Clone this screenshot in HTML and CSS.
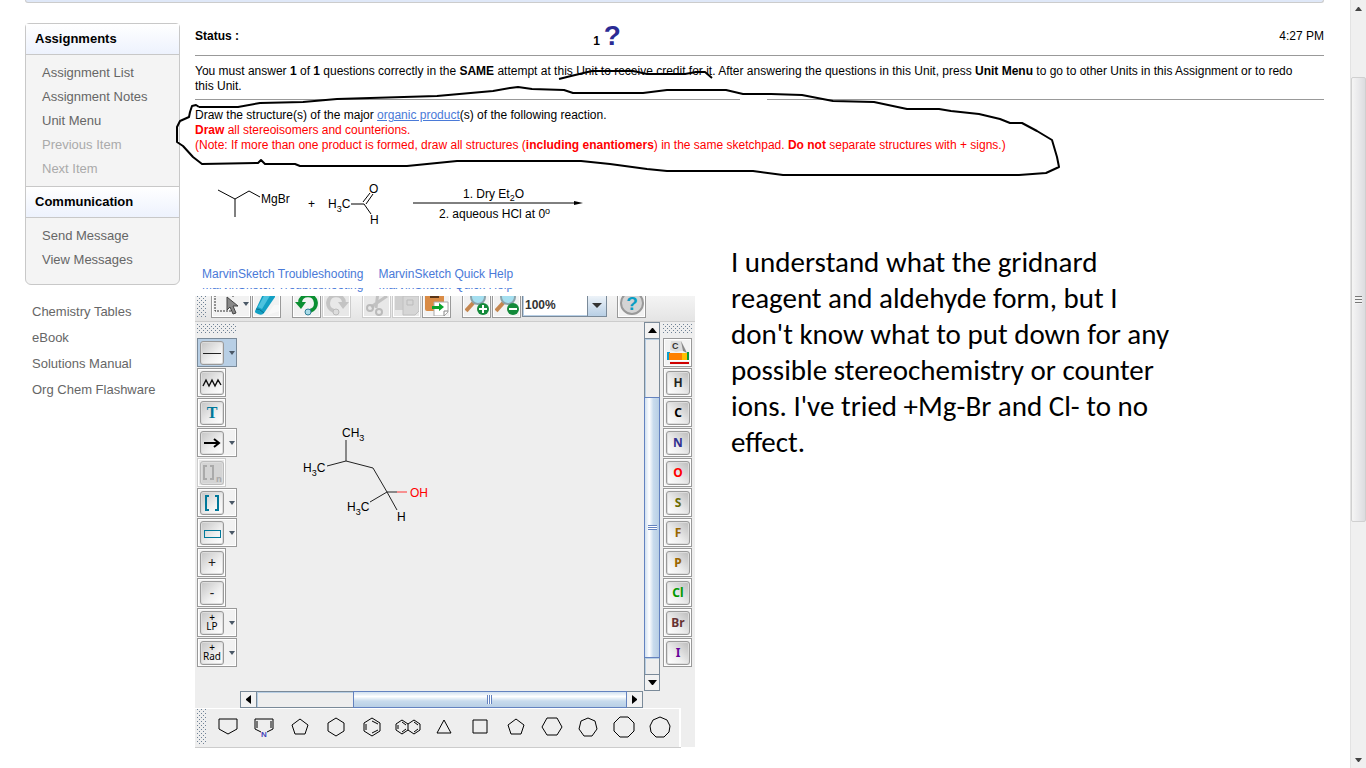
FILE: index.html
```html
<!DOCTYPE html>
<html lang="en">
<head>
    <meta charset="UTF-8">
    <meta name="viewport" content="width=device-width, initial-scale=1.0">
    <title>Unit Question</title>
    <link rel="stylesheet" href="styles.css">
</head>
<body>

    <div class="page">
        <div class="topbar"></div>

        <div class="columns">
            <div class="side">
                <div class="menu">
                    <h2>Assignments</h2>
                    <ul>
                        <li><a href="#">Assignment List</a></li>
                        <li><a href="#">Assignment Notes</a></li>
                        <li><a href="#">Unit Menu</a></li>
                        <li><a href="#" class="off">Previous Item</a></li>
                        <li><a href="#" class="off">Next Item</a></li>
                    </ul>
                    <h2 class="second">Communication</h2>
                    <ul class="last">
                        <li><a href="#">Send Message</a></li>
                        <li><a href="#">View Messages</a></li>
                    </ul>
                </div>
                <ul class="links">
                    <li><a href="#">Chemistry Tables</a></li>
                    <li><a href="#">eBook</a></li>
                    <li><a href="#">Solutions Manual</a></li>
                    <li><a href="#">Org Chem Flashware</a></li>
                </ul>
            </div>

            <div class="content">
                <div class="status">
                    <b>Status :</b>
                    <div class="count"><b>1</b><span>?</span></div>
                    <div>4:27 PM</div>
                </div>
                <p class="rule">You must answer <b>1</b> of <b>1</b> questions correctly in the <b>SAME</b> attempt at this Unit to receive credit for it. After answering the questions in this Unit, press <b>Unit Menu</b> to go to other Units in this Assignment or to redo<br>this Unit.</p>
                <div class="question">
                    <p>Draw the structure(s) of the major <a href="#">organic product</a>(s) of the following reaction.</p>
                    <p class="red"><b>Draw</b> all stereoisomers and counterions.</p>
                    <p class="red">(Note: If more than one product is formed, draw all structures (<b>including enantiomers</b>) in the same sketchpad. <b>Do not</b> separate structures with + signs.)</p>
                </div>

                <div class="work">
                    <div class="sketch">
                        <svg class="reaction" viewBox="195 153 400 110">
                            <g class="bond">
                                <path d="M218 190L235 199V217M235 199L249 191L260 197"/>
                                <path d="M351 204H364L371 214M363 202L370 193M366 204L373 194"/>
                                <path d="M413 203H576"/>
                            </g>
                            <path d="M574 201L583 203L574 205z"/>
                            <text x="261" y="203">MgBr</text>
                            <text x="308" y="208">+</text>
                            <text x="328" y="208">H<tspan class="sub" dy="4">3</tspan><tspan dy="-4">C</tspan></text>
                            <text x="369" y="193">O</text>
                            <text x="370" y="224">H</text>
                            <text x="463" y="198">1. Dry Et<tspan class="sub" dy="3">2</tspan><tspan dy="-3">O</tspan></text>
                            <text x="439" y="218">2. aqueous HCl at 0<tspan class="sub" dy="-4">o</tspan></text>
                        </svg>

                        <div class="help"><a href="#">MarvinSketch Troubleshooting</a><a href="#">MarvinSketch Quick Help</a></div>
                        <div class="help cut"><a href="#">MarvinSketch Troubleshooting</a><a href="#">MarvinSketch Quick Help</a></div>

                        <div class="applet">
                            <div class="toolbar">
                                <i class="grip"></i>
                                <button class="tool wide" aria-label="Select">
                                    <svg class="icon" viewBox="0 0 24 24"><path d="M1 0V19H17M19 0V6" fill="none" stroke="#333" stroke-dasharray="2 1"/><path d="M13 5L13 18L16 15L19 22L22 21L19 14L24 14z" fill="#888" stroke="#444"/></svg>
                                    <i class="drop"></i>
                                </button>
                                <button class="tool" aria-label="Erase">
                                    <svg class="icon" viewBox="0 0 24 24"><path d="M12 23L19 13L25 13V19z" fill="#f8f8f8"/><path d="M9 0H20V5L9 21Q7 24 3 22L1 21Q-1 20 1 17z" fill="#12a0c4"/><path d="M1 17Q4 16 9 21" fill="none" stroke="#0a6f8c"/><path d="M11 0L3 15L7 17L16 2z" fill="#4cc3df"/></svg>
                                </button>
                                <button class="tool gap" aria-label="Undo">
                                    <svg class="icon" viewBox="0 0 24 24"><path d="M15 19A8 8 0 1 0 5 10" fill="none" stroke="#0b8f32" stroke-width="4"/><path d="M0 10H11L6 17z" fill="#0b8f32"/><circle cx="13" cy="20" r="3" fill="#a9dbe8" stroke="#2f7f98"/></svg>
                                </button>
                                <button class="tool off" aria-label="Redo">
                                    <svg class="icon" viewBox="0 0 24 24"><path d="M9 19A8 8 0 1 1 19 10" fill="none" stroke="#c4c4c4" stroke-width="4"/><path d="M24 10H13L18 17z" fill="#c4c4c4"/><circle cx="11" cy="20" r="3" fill="#ddd" stroke="#bbb"/></svg>
                                </button>
                                <button class="tool off gap" aria-label="Cut">
                                    <svg class="icon" viewBox="0 0 24 24"><path d="M13 0L11 16M22 4L6 15" fill="none" stroke="#c2c2c2" stroke-width="3"/><circle cx="5" cy="16" r="3" fill="none" stroke="#bbb" stroke-width="2"/><circle cx="14" cy="20" r="3" fill="none" stroke="#bbb" stroke-width="2"/></svg>
                                </button>
                                <button class="tool off" aria-label="Copy">
                                    <svg class="icon" viewBox="0 0 24 24"><path d="M0 0H16V18H0z" fill="#cfcfcf"/><path d="M8 4H24V19L20 23H8z" fill="#d6d6d6" stroke="#c0c0c0"/><path d="M12 8H18V13H12z" fill="none" stroke="#bbb"/></svg>
                                </button>
                                <button class="tool" aria-label="Paste">
                                    <svg class="icon" viewBox="0 0 24 24"><path d="M0 0H19V19H2Q0 19 0 17z" fill="#d98b45"/><path d="M5 3H14V6H5z" fill="#5a3517"/><path d="M9 10H23V20L19 24H9z" fill="#fff" stroke="#aaa"/><path d="M23 19H19V24" fill="none" stroke="#888"/><path d="M7 14H14V11L19 15L14 19V17H7z" fill="#08a32d"/></svg>
                                </button>
                                <button class="tool gap" aria-label="Zoom in">
                                    <svg class="icon" viewBox="0 0 24 24"><path d="M1 19L9 10" stroke="#c58750" stroke-width="4"/><circle cx="13" cy="5" r="7" fill="#a5dff0" stroke="#8aa3ab" stroke-width="2"/><circle cx="18" cy="17" r="6" fill="#138a3a"/><path d="M14 17H22M18 13V21" stroke="#fff" stroke-width="2"/></svg>
                                </button>
                                <button class="tool" aria-label="Zoom out">
                                    <svg class="icon" viewBox="0 0 24 24"><path d="M1 19L9 10" stroke="#c58750" stroke-width="4"/><circle cx="13" cy="5" r="7" fill="#a5dff0" stroke="#8aa3ab" stroke-width="2"/><circle cx="18" cy="17" r="6" fill="#138a3a"/><path d="M14 17H22" stroke="#fff" stroke-width="2"/></svg>
                                </button>
                                <div class="combo">
                                    <select aria-label="Zoom"><option>100%</option><option>200%</option></select>
                                    <span><i></i></span>
                                </div>
                                <button class="tool gap" aria-label="Help">
                                    <svg class="icon" viewBox="0 0 24 24"><circle cx="12" cy="11" r="11" fill="#d4d4d4" stroke="#999" stroke-width="2"/><text x="12" y="18" class="q">?</text></svg>
                                </button>
                            </div>

                            <div class="middle">
                                <div class="tools left">
                                    <i class="grip flat"></i>
                                    <button class="tool wide active" aria-label="Bond"><span class="key"><svg viewBox="0 0 24 24"><path d="M3 12H21" stroke="#222"/></svg></span><i class="drop"></i></button>
                                    <button class="tool" aria-label="Chain"><span class="key"><svg class="smooth" viewBox="0 0 24 24"><path d="M3 15L6 9L9 15L12 9L15 15L18 9L21 14" fill="none" stroke="#111" stroke-width="1.4"/></svg></span></button>
                                    <button class="tool"><span class="key serif">T</span></button>
                                    <button class="tool wide" aria-label="Arrow"><span class="key"><svg class="smooth" viewBox="0 0 24 24"><path d="M4 12H19M14 8L19 12L14 16" fill="none" stroke="#000" stroke-width="2"/></svg></span><i class="drop"></i></button>
                                    <button class="tool off" aria-label="Repeat group"><span class="key"><svg viewBox="0 0 24 24"><path d="M7 5H4V18H7M10 5H13V18H10" fill="none" stroke="#aaa" stroke-width="1.5"/><text x="16" y="21" class="n">n</text></svg></span></button>
                                    <button class="tool wide" aria-label="Brackets"><span class="key"><svg viewBox="0 0 24 24"><path d="M9 5H6V19H9M15 5H18V19H15" fill="none" stroke="#00789a" stroke-width="2"/></svg></span><i class="drop"></i></button>
                                    <button class="tool wide" aria-label="Rectangle"><span class="key"><svg viewBox="0 0 24 24"><path d="M4 9H20V16H4z" fill="none" stroke="#00789a" stroke-width="1"/></svg></span><i class="drop"></i></button>
                                    <button class="tool"><span class="key sign">+</span></button>
                                    <button class="tool"><span class="key sign">-</span></button>
                                    <button class="tool wide"><span class="key two"><span>+</span><span>LP</span></span><i class="drop"></i></button>
                                    <button class="tool wide"><span class="key two"><span>+</span><span>Rad</span></span><i class="drop"></i></button>
                                </div>

                                <svg class="canvas" viewBox="240 322 403 369">
                                    <path d="M346 440V461L327 466M346 461L373 468L387 492L370 502M387 492L397 510M387 492H397" fill="none" stroke="#222"/>
                                    <path d="M397 492H407" stroke="#f33"/>
                                    <text x="342" y="437">CH<tspan class="sub" dy="4">3</tspan></text>
                                    <text x="303" y="472">H<tspan class="sub" dy="4">3</tspan><tspan dy="-4">C</tspan></text>
                                    <text x="347" y="511">H<tspan class="sub" dy="4">3</tspan><tspan dy="-4">C</tspan></text>
                                    <text x="397" y="521">H</text>
                                    <text x="410" y="497" fill="#f00">OH</text>
                                </svg>

                                <div class="vscroll">
                                    <button aria-label="Scroll up"><svg viewBox="0 0 9 5"><path d="M0 5L4 0H5L9 5z"/></svg></button>
                                    <div class="before"></div>
                                    <div class="thumb"><i></i></div>
                                    <div class="after"></div>
                                    <button aria-label="Scroll down"><svg viewBox="0 0 9 5"><path d="M0 0L4 5H5L9 0z"/></svg></button>
                                </div>

                                <div class="tools right">
                                    <i class="grip flat"></i>
                                    <button class="tool" aria-label="Periodic table">
                                        <svg class="icon" viewBox="0 0 24 24"><path d="M5 0H15L20 9L10 11L4 9z" fill="#ddd"/><path d="M15 0L21 12L17 10z" fill="#888"/><text x="6" y="8" class="n dark">C</text><path d="M1 11H4V19H1z" fill="#0aa0d0"/><path d="M3 12H16V19H3z" fill="#ff8000"/><path d="M16 12H21V19H16z" fill="#ffc000"/><path d="M21 11H23V19H21z" fill="#0a9a3a"/><path d="M4 21H23V23H4z" fill="#d00000"/><path d="M4 19H23V20H4z" fill="#fff"/></svg>
                                    </button>
                                    <button class="tool"><span class="key h">H</span></button>
                                    <button class="tool"><span class="key c">C</span></button>
                                    <button class="tool"><span class="key n">N</span></button>
                                    <button class="tool"><span class="key o">O</span></button>
                                    <button class="tool"><span class="key s">S</span></button>
                                    <button class="tool"><span class="key f">F</span></button>
                                    <button class="tool"><span class="key f">P</span></button>
                                    <button class="tool"><span class="key cl">Cl</span></button>
                                    <button class="tool"><span class="key br">Br</span></button>
                                    <button class="tool"><span class="key i">I</span></button>
                                </div>

                                <div class="hscroll">
                                    <button aria-label="Scroll left"><svg viewBox="0 0 5 9"><path d="M5 0L0 4V5L5 9z"/></svg></button>
                                    <div class="before"></div>
                                    <div class="thumb"><i></i></div>
                                    <button aria-label="Scroll right"><svg viewBox="0 0 5 9"><path d="M0 0L5 4V5L0 9z"/></svg></button>
                                </div>
                            </div>

                            <div class="rings">
                                <i class="grip"></i>
                                <button aria-label="Cyclopentane"><svg viewBox="0 0 24 24"><path d="M3 4H21V14L12 19L3 14z"/></svg></button>
                                <button aria-label="Pyrrole"><svg viewBox="0 0 24 24"><path d="M9 17L3 14V4H21V14L15 17M5 6V13M19 6V13"/><text x="9" y="22" class="nitro">N</text></svg></button>
                                <button aria-label="Five ring"><svg viewBox="0 0 24 24"><path d="M12 4L20 10L17 19H7L4 10z"/></svg></button>
                                <button aria-label="Cyclohexane"><svg viewBox="0 0 24 24"><path d="M12 3L20 8V16L12 21L4 16V8z"/></svg></button>
                                <button aria-label="Benzene"><svg viewBox="0 0 24 24"><path d="M12 3L20 8V16L12 21L4 16V8zM12 6L18 9M18 15L12 18M6 9V15"/></svg></button>
                                <button aria-label="Naphthalene"><svg class="naph" viewBox="0 0 28 24"><path d="M8 5L14 9V15L8 19L2 15V9zM14 9L20 5L26 9V15L20 19L14 15M4 10V14M8 7L12 10M8 17L12 14M20 7L24 10M20 17L24 14"/></svg></button>
                                <button aria-label="Triangle"><svg viewBox="0 0 24 24"><path d="M12 5L19 18H5z"/></svg></button>
                                <button aria-label="Square"><svg viewBox="0 0 24 24"><path d="M5 5H19V18H5z"/></svg></button>
                                <button aria-label="Pentagon"><svg viewBox="0 0 24 24"><path d="M12 4L20 10L17 19H7L4 10z"/></svg></button>
                                <button aria-label="Hexagon"><svg viewBox="0 0 24 24"><path d="M7 3H17L22 12L17 20H7L2 12z"/></svg></button>
                                <button aria-label="Heptagon"><svg viewBox="0 0 24 24"><path d="M12 3L19 6L21 14L16 21H8L3 14L5 6z"/></svg></button>
                                <button aria-label="Octagon"><svg viewBox="0 0 24 24"><path d="M8 2H16L22 8V16L16 22H8L2 16V8z"/></svg></button>
                                <button aria-label="Nonagon"><svg viewBox="0 0 24 24"><path d="M12 2L19 5L22 11L21 17L16 22H8L3 17L2 11L5 5z"/></svg></button>
                            </div>
                        </div>
                    </div>

                    <p class="note">I understand what the gridnard reagent and aldehyde form, but I don't know what to put down for any possible stereochemistry or counter ions. I've tried +Mg-Br and Cl- to no effect.</p>
                </div>
            </div>
        </div>
    </div>

    <div class="scrollbar">
        <svg viewBox="0 0 7 4"><path d="M0 4L3 0H4L7 4z"/></svg>
        <div class="before"></div>
        <div class="thumb"><i></i></div>
        <div class="after"></div>
        <svg viewBox="0 0 7 4"><path d="M0 0L3 4H4L7 0z"/></svg>
    </div>

    <!-- pen marks drawn over the question -->
    <svg class="pen" viewBox="0 0 1100 200">
        <path class="rub" d="M740 97H767V102H740z"/>
        <path d="M559 79L571 76L592 71H633L647 74H685L696 72H705L712 78"/>
        <path d="M199 107L196 105L192 106L190 112L189 117L180 121L177 127V142L183 146L193 157L202 164L258 163L261 160L265 164H295L300 166H407L457 161H581L610 164L647 169L667 171H753L783 175H1019L1046 173L1059 167L1057 157L1052 140L1037 131L1022 123H1010L1000 119L979 114L951 111L939 109H907L874 102L833 101L802 95L771 94H743L726 90H667L643 93H573L564 90L532 89L518 87L510 88L493 91L437 96L337 99L303 102L260 103L238 107H199"/>
    </svg>

</body>
</html>
```

FILE: styles.css
```css
* {
    box-sizing: border-box;
}
body {
    margin: 0;
    min-height: 100vh;
    display: flex;
    position: relative;
    background: #fff;
    color: #000;
    font-family: Arial, "Liberation Sans", sans-serif;
    font-size: 12px;
    line-height: 15px;
}
p, h2, ul {
    margin: 0;
    padding: 0;
}
ul {
    list-style: none;
}
a {
    color: #4a7ad8;
}
button {
    font-family: inherit;
    padding: 0;
    margin: 0;
    border: 0;
    background: none;
}
svg {
    display: block;
}
.page {
    flex: 1;
    min-width: 0;
    padding: 0 26px 0 25px;
}
.topbar {
    height: 3px;
    background: #dfe8f8;
    border: 1px solid #ccc;
    border-top: 0;
    border-radius: 0 0 4px 4px;
    margin-bottom: 20px;
}
.columns {
    display: flex;
    gap: 15px;
}

/* left menu */
.side {
    width: 155px;
    flex: none;
    font-size: 13px;
}
.side a {
    color: #666;
    text-decoration: none;
}
.side a.off {
    color: #aaa;
}
.menu {
    border: 1px solid #c8c8c8;
    border-radius: 4px 4px 6px 6px;
    background: #f4f4f4;
}
.menu h2 {
    font-size: 13px;
    line-height: 30px;
    padding-left: 9px;
    background: linear-gradient(#fff, #edf2fd);
    border-bottom: 1px solid #c8c8c8;
}
.menu h2.second {
    border-top: 1px solid #c8c8c8;
}
.menu ul {
    padding: 6px 0 5px 16px;
    line-height: 24px;
}
.menu ul.last {
    padding-bottom: 12px;
}
.links {
    padding: 14px 0 0 7px;
    line-height: 26px;
}

/* main column */
.content {
    flex: 1;
    min-width: 0;
}
.status {
    display: grid;
    grid-template-columns: 35% 1fr auto;
    height: 33px;
    padding-top: 6px;
    border-bottom: 1px solid #999;
}
.count {
    display: flex;
    align-items: baseline;
    gap: 4px;
    padding-left: 3px;
}
.count b {
    line-height: 24px;
}
.count span {
    font-size: 28px;
    line-height: 8px;
    font-weight: bold;
    color: #2b2b94;
}
.rule {
    padding: 8px 0 5px;
    border-bottom: 1px solid #999;
    white-space: nowrap;
}
.question {
    padding-top: 8px;
}
.red {
    color: #f00;
}
.work {
    display: flex;
    gap: 36px;
}
.sketch {
    width: 500px;
    flex: none;
}
.reaction {
    width: 400px;
    height: 110px;
}
.bond {
    fill: none;
    stroke: #000;
}
.sub {
    font-size: 9px;
}
.help {
    display: flex;
    gap: 15px;
    padding-left: 7px;
    line-height: 22px;
}
.help a {
    text-decoration: none;
}
.help.cut {
    height: 5px;
    margin: 3px 0;
    line-height: 16px;
    align-items: flex-end;
    overflow: hidden;
}
.note {
    width: 448px;
    padding-top: 91px;
    font-family: Carlito, Lato, sans-serif;
    font-size: 29px;
    line-height: 36px;
}

/* sketcher */
.applet {
    background: #eee;
}
.toolbar {
    display: flex;
    align-items: flex-end;
    height: 26px;
    padding: 0 0 3px 2px;
    border-bottom: 1px solid #ccc;
    background: linear-gradient(#f4f4f4, #e4e4e4);
    overflow: hidden;
}
.grip {
    flex: none;
    width: 10px;
    height: 30px;
    margin-right: 4px;
    background-image: conic-gradient(at 1px 1px, transparent 270deg, #6f8296 0), conic-gradient(at 1px 1px, transparent 270deg, #6f8296 0);
    background-size: 4px 4px;
    background-position: 0 0, 2px 2px;
}
.grip.flat {
    width: 100%;
    height: 10px;
    margin: 0 0 4px;
}
.tool {
    flex: none;
    display: flex;
    align-items: center;
    width: 29px;
    height: 29px;
    margin: 0 1px 1px 0;
    padding: 0 2px;
    border: 1px solid #999;
    background: #f2f2f2;
    box-shadow: inset 0 0 0 1px #fff;
}
.toolbar .tool {
    margin-bottom: 0;
}
.tool.wide {
    width: 40px;
}
.tool.gap {
    margin-left: 10px;
}
.tool.off {
    border-color: #ccc;
    background: #e8e8e8;
}
.tool.active {
    background: #b8cfe5;
    border-color: #7a8a99;
    box-shadow: none;
}
.icon {
    width: 24px;
    height: 24px;
    flex: none;
}
.drop {
    margin-left: 5px;
    border: 3px solid transparent;
    border-top: 4px solid #4a5866;
    border-bottom: 0;
}
.q {
    font: bold 19px "Liberation Sans", sans-serif;
    text-anchor: middle;
    fill: #0a9ec4;
}
text.n {
    font-size: 9px;
    fill: #aaa;
}
text.dark {
    font-weight: bold;
    fill: #333;
}
.combo {
    display: flex;
    position: relative;
    width: 85px;
    height: 29px;
    border: 1px solid #7a8a99;
    margin: 0 0 1px;
}
.combo select {
    appearance: none;
    flex: 1;
    border: 1px solid #b8cfe5;
    border-radius: 0;
    background: #fff;
    padding: 4px 0 0 1px;
    font: bold 12px "Liberation Sans", sans-serif;
    color: #333;
}
.combo span {
    position: absolute;
    right: 0;
    top: 0;
    width: 19px;
    height: 27px;
    padding: 14px 0 0 4px;
    border-left: 1px solid #7a8a99;
    background: linear-gradient(#fff, #b8cfe5);
    pointer-events: none;
}
.combo i {
    display: block;
    width: 10px;
    border: 5px solid transparent;
    border-top-color: #333;
    border-bottom: 0;
}
.middle {
    display: grid;
    grid-template-columns: 45px 1fr 17px 35px;
    grid-template-rows: auto 17px;
}
.tools {
    display: flex;
    flex-direction: column;
    grid-row: 1 / 3;
    padding-top: 2px;
}
.left {
    grid-column: 1;
    padding-left: 2px;
}
.left .flat {
    width: 40px;
}
.right {
    grid-column: 4;
    padding: 2px 3px;
}
.key {
    flex: none;
    display: flex;
    align-items: center;
    justify-content: center;
    width: 24px;
    height: 24px;
    border: 1px solid #999;
    border-radius: 3px;
    background: linear-gradient(135deg, #c4c4c4, #f0f0f0 60%, #fff);
    box-shadow: inset 0 0 0 1px #ddd;
    font: bold 12px "Noto Sans", sans-serif;
    color: #222;
}
.key svg {
    width: 24px;
    height: 24px;
    flex: none;
    shape-rendering: crispEdges;
}
.key svg.smooth {
    shape-rendering: auto;
}
.right .key {
    background: linear-gradient(225deg, #bbb, #eee 60%, #fff);
}
.off .key {
    background: #d4d4d4;
    border-color: #bbb;
}
.key.serif {
    font: bold 16px "Liberation Serif", serif;
    color: #00789a;
}
.key.sign {
    font-weight: normal;
    font-size: 14px;
}
.key.two {
    flex-direction: column;
    font-weight: normal;
    font-size: 10px;
    color: #000;
    line-height: 11px;
}
.key.two span:first-child {
    line-height: 7px;
}
.key.c { color: #000; }
.key.n { color: #303090; }
.key.o { color: #f00; }
.key.s { color: #6b6b00; }
.key.f { color: #996600; }
.key.cl { color: #009900; }
.key.br { color: #663333; }
.key.i { color: #660099; }
.canvas {
    grid-column: 2;
    grid-row: 1;
    width: 100%;
    height: 369px;
}
.vscroll, .hscroll {
    display: flex;
    border: 1px solid #7a8a99;
}
.vscroll {
    flex-direction: column;
    grid-column: 3;
    grid-row: 1;
    margin-left: 1px;
}
.hscroll {
    grid-column: 2;
    grid-row: 2;
}
.vscroll button, .hscroll button {
    flex: none;
    display: flex;
    align-items: center;
    justify-content: center;
    background: #f2f2f2;
}
.vscroll button {
    height: 15px;
}
.hscroll button {
    width: 15px;
}
.vscroll button svg {
    width: 9px;
    height: 5px;
}
.hscroll button svg {
    width: 5px;
    height: 9px;
}
.vscroll .before, .vscroll .after {
    flex: 59;
    border: solid #7a8a99;
    border-width: 1px 0 0;
    box-shadow: inset 1px 1px 0 #b8cfe5;
}
.vscroll .after {
    flex: 16;
    border-width: 0 0 1px;
}
.vscroll .thumb {
    flex: 261;
    display: flex;
    align-items: center;
    justify-content: center;
    margin: 0 -1px;
    border: 1px solid #6382bf;
    background: linear-gradient(90deg, #d0e0f0, #fff 30%, #c8dbed 60%, #b8cfe5);
}
.vscroll .thumb i {
    width: 9px;
    height: 5px;
    background: repeating-linear-gradient(#6382bf 0 1px, #fff 1px 2px);
}
.hscroll .before {
    flex: 97;
    border-left: 1px solid #7a8a99;
    box-shadow: inset 1px 1px 0 #b8cfe5;
}
.hscroll .thumb {
    flex: 275;
    display: flex;
    align-items: center;
    justify-content: center;
    margin: -1px 0;
    border: 1px solid #6382bf;
    background: linear-gradient(#d0e0f0, #fff 30%, #c8dbed 60%, #b8cfe5);
}
.hscroll .thumb i {
    width: 5px;
    height: 9px;
    background: repeating-linear-gradient(90deg, #6382bf 0 1px, #fff 1px 2px);
}
.rings {
    display: flex;
    align-items: center;
    width: 486px;
    height: 39px;
    padding: 0 0 2px 2px;
    border: solid #fff;
    border-width: 1px 2px 0 0;
    box-shadow: 0 1px 0 #ccc;
}
.rings .grip {
    height: 36px;
    margin-right: 3px;
}
.rings button {
    width: 36px;
    display: flex;
    justify-content: center;
}
.rings svg {
    width: 24px;
    height: 24px;
    fill: none;
    stroke: #000;
}
.rings svg.naph {
    width: 28px;
}
.nitro {
    font: bold 8px "Liberation Sans", sans-serif;
    fill: #4444bb;
    stroke: none;
}

/* window scroll bar */
.scrollbar {
    width: 16px;
    height: 100vh;
    padding: 7px 0 6px;
    display: flex;
    flex-direction: column;
    align-items: center;
    background: #f0f0f0;
    border-left: 1px solid #e3e3e3;
}
.scrollbar svg {
    width: 7px;
    height: 4px;
    fill: #444;
}
.scrollbar .before {
    flex: 66;
}
.scrollbar .after {
    flex: 236;
}
.scrollbar .thumb {
    flex: 444;
    width: 15px;
    display: flex;
    align-items: center;
    justify-content: center;
    border: 1px solid #d0d0d0;
    border-radius: 2px;
    background: linear-gradient(90deg, #f5f5f5, #e9e9eb 50%, #dcdcdf);
}
.scrollbar .thumb i {
    width: 7px;
    height: 8px;
    background: repeating-linear-gradient(#777 0 1px, #f4f4f4 1px 3px);
}
.pen {
    position: absolute;
    left: 0;
    top: 0;
    width: 1100px;
    height: 200px;
    fill: none;
    stroke: #000;
    stroke-width: 2;
    stroke-linejoin: round;
    pointer-events: none;
}
.pen .rub {
    fill: #fff;
    stroke: none;
}
```
